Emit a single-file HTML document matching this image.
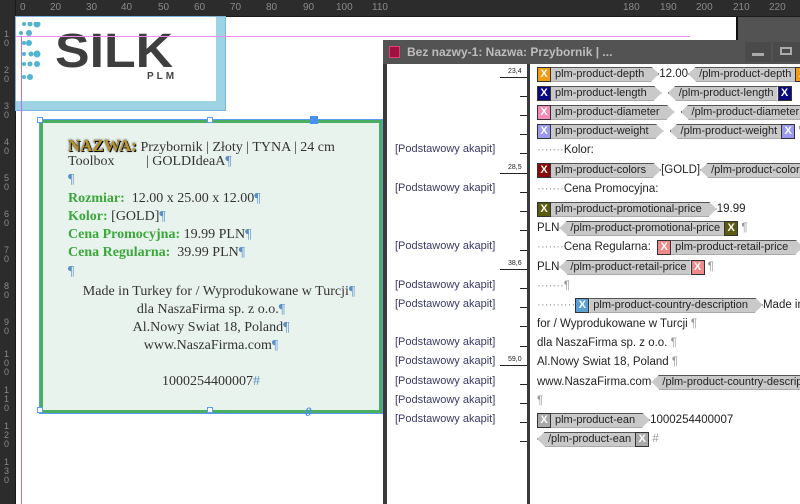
<!DOCTYPE html>
<html><head><meta charset="utf-8">
<style>
*{margin:0;padding:0;box-sizing:border-box}
body{width:800px;height:504px;overflow:hidden;background:#535353;position:relative;font-family:"Liberation Sans",sans-serif}
.abs{position:absolute}
.ruler-t{left:0;top:0;width:800px;height:17px;background:#2c2c2c;border-bottom:1px solid #1a1a1a}
.ruler-l{left:0;top:0;width:16px;height:504px;background:#2c2c2c;border-right:1px solid #1a1a1a}
.rn{position:absolute;top:2px;font-size:10px;color:#8a8a8a}
.rl{position:absolute;left:4px;font-size:9px;color:#8a8a8a;line-height:9px;width:8px}
.page{left:16px;top:17px;width:720px;height:487px;background:#fff}
.frame{left:40px;top:120px;width:342px;height:293px;background:#e9f3ee;border:3px solid #4aae62;outline:1px solid #5b9cf0}
.ft{position:absolute;font-family:"Liberation Serif",serif;font-size:14px;color:#333;white-space:nowrap}
.g{color:#3aa83a;font-weight:bold}
.cen{left:0;width:336px;text-align:center}
.win{left:383px;top:40px;width:417px;height:464px;background:#3a3a3a}
.title{left:383px;top:40px;width:417px;height:24px;background:#535353;color:#bdbdbd;font-size:12px;font-weight:bold}
.lc{left:387px;top:64px;width:140px;height:440px;background:#fff}
.rc{left:530px;top:64px;width:270px;height:440px;background:#fff}
.pa{position:absolute;left:395px;font-size:11px;color:#3a3a66;white-space:nowrap}
.tk{position:absolute;left:520px;width:7px;height:1px;background:#222}
.ln{position:absolute;left:500px;width:27px;height:1px;background:#222}
.lnt{position:absolute;font-size:7px;color:#222;left:508px}
.row{position:absolute;left:537px;height:16px;display:flex;align-items:center;font-size:11.5px;color:#222;white-space:nowrap}
.sq{width:14px;height:15px;color:#fff;font-size:11px;font-weight:bold;display:flex;align-items:center;justify-content:center;border:1px solid #333}
.po{height:15px;background:#c9c9c9;border:1px solid #555;border-left:none;padding:0 14px 0 4px;display:flex;align-items:center;clip-path:polygon(0 0,calc(100% - 8px) 0,100% 50%,calc(100% - 8px) 100%,0 100%);font-size:11px}
.pc{height:15px;background:#c9c9c9;border:1px solid #555;border-right:none;padding:0 4px 0 10px;display:flex;align-items:center;clip-path:polygon(8px 0,100% 0,100% 100%,8px 100%,0 50%);font-size:11px}
.dot{color:#999}
.pil{color:#5a8fc8}
</style></head><body>
<div class="abs ruler-t">
<span class="rn" style="left:20px">0</span><span class="rn" style="left:50px">20</span><span class="rn" style="left:86px">30</span><span class="rn" style="left:121px">40</span><span class="rn" style="left:158px">50</span><span class="rn" style="left:194px">60</span><span class="rn" style="left:230px">70</span><span class="rn" style="left:266px">80</span><span class="rn" style="left:303px">90</span><span class="rn" style="left:336px">100</span><span class="rn" style="left:372px">110</span><span class="rn" style="left:623px">180</span><span class="rn" style="left:660px">190</span><span class="rn" style="left:696px">200</span><span class="rn" style="left:733px">210</span><span class="rn" style="left:769px">220</span>
</div>
<div class="abs ruler-l">
<div class="rl" style="top:30px">1<br>0</div><div class="rl" style="top:66px">2<br>0</div><div class="rl" style="top:102px">3<br>0</div><div class="rl" style="top:138px">4<br>0</div><div class="rl" style="top:174px">5<br>0</div><div class="rl" style="top:210px">6<br>0</div><div class="rl" style="top:246px">7<br>0</div><div class="rl" style="top:282px">8<br>0</div><div class="rl" style="top:318px">9<br>0</div><div class="rl" style="top:350px">1<br>0<br>0</div><div class="rl" style="top:386px">1<br>1<br>0</div><div class="rl" style="top:422px">1<br>2<br>0</div><div class="rl" style="top:458px">1<br>3<br>0</div>
</div>
<div class="abs page"></div>
<div class="abs" style="left:736px;top:17px;width:2px;height:23px;background:#111"></div>
<!-- logo frame -->
<div class="abs" style="left:16px;top:17px;width:209px;height:93px;border-right:9px solid #9ed3e4;border-bottom:9px solid #9ed3e4;outline:1px solid #7fb0d8"></div>
<div class="abs" style="left:55px;top:27px;font-size:48px;font-weight:bold;color:#3e3e3e;line-height:50px;transform:scaleX(1.08);transform-origin:left">SILK</div>
<div class="abs" style="left:147px;top:71px;font-size:10px;color:#444;letter-spacing:3px;font-weight:bold">PLM</div>
<div class="abs" style="left:19px;top:22px;width:24px;height:60px">
<svg width="24" height="60"><g fill="#4fb5d0"><circle cx="5" cy="2" r="2"/><circle cx="11" cy="2" r="2.5"/><circle cx="18" cy="2" r="3.5"/><circle cx="2" cy="11" r="2"/><circle cx="10" cy="11" r="3"/><circle cx="10" cy="21" r="3"/><circle cx="5" cy="21" r="2"/><circle cx="5" cy="32" r="2"/><circle cx="12" cy="32" r="2.5"/><circle cx="18" cy="32" r="3.5"/><circle cx="5" cy="42" r="2"/><circle cx="11" cy="42" r="2.5"/><circle cx="18" cy="42" r="3"/><circle cx="5" cy="55" r="2"/><circle cx="11" cy="55" r="3"/></g></svg></div>
<div class="abs" style="left:16px;top:36px;width:674px;height:1px;background:#f08cf0"></div>
<div class="abs" style="left:21px;top:36px;width:1px;height:468px;background:#b070f0"></div>
<!-- text frame -->
<div class="abs frame">
<div class="ft" style="left:25px;top:13px"><span style="font-weight:bold;color:#b8922a;font-size:17px;text-shadow:0 0 2px #000,1px 1px 0 #000">NAZWA:</span> Przybornik | Złoty | TYNA | 24 cm</div>
<div class="ft" style="left:25px;top:31px">Toolbox &nbsp;&nbsp;&nbsp;&nbsp;&nbsp;&nbsp;&nbsp; | GOLDIdeaA<span class="pil">¶</span></div>
<div class="ft" style="left:25px;top:49px"><span class="pil">¶</span></div>
<div class="ft" style="left:25px;top:68px"><span class="g">Rozmiar:</span> &nbsp;12.00 x 25.00 x 12.00<span class="pil">¶</span></div>
<div class="ft" style="left:25px;top:86px"><span class="g">Kolor:</span> [GOLD]<span class="pil">¶</span></div>
<div class="ft" style="left:25px;top:104px"><span class="g">Cena Promocyjna:</span> 19.99 PLN<span class="pil">¶</span></div>
<div class="ft" style="left:25px;top:122px"><span class="g">Cena Regularna:</span> &nbsp;39.99 PLN<span class="pil">¶</span></div>
<div class="ft" style="left:25px;top:141px"><span class="pil">¶</span></div>
<div class="ft cen" style="top:161px;left:8px">Made in Turkey for / Wyprodukowane w Turcji<span class="pil">¶</span></div>
<div class="ft cen" style="top:179px">dla NaszaFirma sp. z o.o.<span class="pil">¶</span></div>
<div class="ft cen" style="top:197px">Al.Nowy Swiat 18, Poland<span class="pil">¶</span></div>
<div class="ft cen" style="top:215px">www.NaszaFirma.com<span class="pil">¶</span></div>
<div class="ft cen" style="top:251px">1000254400007<span class="pil">#</span></div>
</div>
<div class="abs" style="left:37px;top:117px;width:6px;height:6px;background:#fff;border:1px solid #5b9cf0"></div>
<div class="abs" style="left:207px;top:117px;width:6px;height:6px;background:#fff;border:1px solid #5b9cf0"></div>
<div class="abs" style="left:310px;top:116px;width:8px;height:8px;background:#4a90f0"></div>
<div class="abs" style="left:37px;top:407px;width:6px;height:6px;background:#fff;border:1px solid #5b9cf0"></div>
<div class="abs" style="left:207px;top:407px;width:6px;height:6px;background:#fff;border:1px solid #5b9cf0"></div>
<div class="abs" style="left:305px;top:404px;font-size:13px;font-style:italic;font-weight:bold;color:#4a90f0;font-family:'Liberation Serif',serif">0</div>
<!-- story editor -->
<div class="abs win"></div>
<div class="abs title"><div style="position:absolute;left:6px;top:6px;width:11px;height:12px;background:#a01040;border:1px solid #e04070"></div><span style="position:absolute;left:24px;top:5px">Bez nazwy-1: Nazwa: Przybornik | ...</span>
<div style="position:absolute;left:362px;top:2px;width:26px;height:20px;background:#4a4a4a"><div style="position:absolute;left:7px;top:11px;width:12px;height:3px;background:#aaa"></div></div>
<div style="position:absolute;left:390px;top:2px;width:27px;height:20px;background:#4a4a4a"><div style="position:absolute;left:7px;top:5px;width:12px;height:8px;border:2px solid #aaa"></div></div></div>
<div class="abs lc"></div>
<div class="abs" style="left:527px;top:64px;width:3px;height:440px;background:#3a3a3a"></div>
<div class="abs rc"></div>

<div class="pa" style="top:143px">[Podstawowy akapit]</div>
<div class="pa" style="top:182px">[Podstawowy akapit]</div>
<div class="pa" style="top:240px">[Podstawowy akapit]</div>
<div class="pa" style="top:279px">[Podstawowy akapit]</div>
<div class="pa" style="top:298px">[Podstawowy akapit]</div>
<div class="pa" style="top:336px">[Podstawowy akapit]</div>
<div class="pa" style="top:355px">[Podstawowy akapit]</div>
<div class="pa" style="top:375px">[Podstawowy akapit]</div>
<div class="pa" style="top:394px">[Podstawowy akapit]</div>
<div class="pa" style="top:413px">[Podstawowy akapit]</div>

<div class="ln" style="top:77px"></div><div class="lnt" style="top:68px">23,4</div>
<div class="tk" style="top:96px"></div><div class="tk" style="top:115px"></div><div class="tk" style="top:134px"></div><div class="tk" style="top:153px"></div>
<div class="ln" style="top:173px"></div><div class="lnt" style="top:164px">28,5</div>
<div class="tk" style="top:192px"></div><div class="tk" style="top:211px"></div><div class="tk" style="top:230px"></div><div class="tk" style="top:250px"></div>
<div class="ln" style="top:269px"></div><div class="lnt" style="top:260px">38,6</div>
<div class="tk" style="top:288px"></div><div class="tk" style="top:307px"></div><div class="tk" style="top:326px"></div><div class="tk" style="top:346px"></div>
<div class="ln" style="top:365px"></div><div class="lnt" style="top:356px">59,0</div>
<div class="tk" style="top:384px"></div><div class="tk" style="top:403px"></div><div class="tk" style="top:422px"></div><div class="tk" style="top:441px"></div>

<div class="row" style="top:66px"><div class="sq" style="background:#f39a10">X</div><div class="po">plm-product-depth</div>12.00<div class="pc">/plm-product-depth</div><div class="sq" style="background:#f39a10">X</div></div>
<div class="row" style="top:85px"><div class="sq" style="background:#0a0a80">X</div><div class="po">plm-product-length</div><div class="pc" style="margin-left:6px">/plm-product-length</div><div class="sq" style="background:#0a0a80">X</div></div>
<div class="row" style="top:104px"><div class="sq" style="background:#f58ab8">X</div><div class="po">plm-product-diameter</div><div class="pc" style="margin-left:6px">/plm-product-diameter</div><div class="sq" style="background:#f58ab8">X</div></div>
<div class="row" style="top:123px"><div class="sq" style="background:#9a9af0">X</div><div class="po">plm-product-weight</div><div class="pc" style="margin-left:6px">/plm-product-weight</div><div class="sq" style="background:#9a9af0">X</div>&nbsp;<span class="dot">¶</span></div>
<div class="row" style="top:142px"><span class="dot">·······</span>Kolor:</div>
<div class="row" style="top:162px"><div class="sq" style="background:#8a0a0a">X</div><div class="po">plm-product-colors</div>[GOLD]<div class="pc">/plm-product-colors</div><div class="sq" style="background:#8a0a0a">X</div></div>
<div class="row" style="top:181px"><span class="dot">·······</span>Cena Promocyjna:</div>
<div class="row" style="top:201px"><div class="sq" style="background:#5a5a10">X</div><div class="po">plm-product-promotional-price</div>19.99</div>
<div class="row" style="top:220px">PLN<div class="pc">/plm-product-promotional-price</div><div class="sq" style="background:#5a5a10">X</div>&nbsp;<span class="dot">¶</span></div>
<div class="row" style="top:239px"><span class="dot">·······</span>Cena Regularna:&nbsp;&nbsp;<div class="sq" style="background:#f08a8a">X</div><div class="po">plm-product-retail-price</div>39</div>
<div class="row" style="top:259px">PLN<div class="pc">/plm-product-retail-price</div><div class="sq" style="background:#f08a8a">X</div>&nbsp;<span class="dot">¶</span></div>
<div class="row" style="top:278px"><span class="dot">·······¶</span></div>
<div class="row" style="top:297px"><span class="dot">··········</span><div class="sq" style="background:#5aa0d0">X</div><div class="po">plm-product-country-description</div>Made in Tur</div>
<div class="row" style="top:316px">for / Wyprodukowane w Turcji <span class="dot">&nbsp;¶</span></div>
<div class="row" style="top:335px">dla NaszaFirma sp. z o.o. <span class="dot">&nbsp;¶</span></div>
<div class="row" style="top:354px">Al.Nowy Swiat 18, Poland <span class="dot">&nbsp;¶</span></div>
<div class="row" style="top:374px">www.NaszaFirma.com<div class="pc">/plm-product-country-description</div></div>
<div class="row" style="top:393px"><span class="dot">¶</span></div>
<div class="row" style="top:412px"><div class="sq" style="background:#aaa">X</div><div class="po">plm-product-ean</div>1000254400007</div>
<div class="row" style="top:431px"><div class="pc">/plm-product-ean</div><div class="sq" style="background:#aaa">X</div>&nbsp;<span class="dot">#</span></div>
</body></html>
